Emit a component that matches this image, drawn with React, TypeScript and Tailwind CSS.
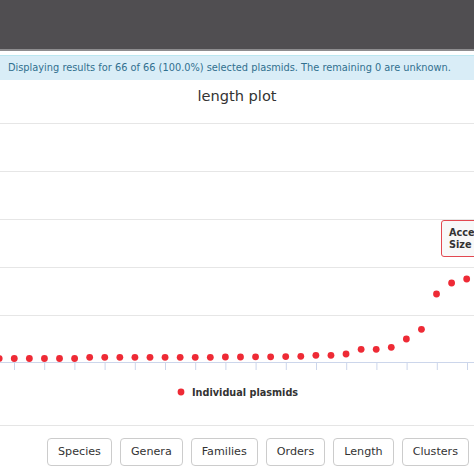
import React from "react";

const dotYs = [
  358.5, 358.5, 358.5, 358.5, 358.5, 358.5,
  357.3, 357.3, 357.3, 357.3, 357.3, 357.3, 357.3, 357.3, 357.3, 357,
  357, 356.8, 356.8, 356.6, 356.3, 355.3, 355.3, 354,
  349.3, 349.3, 347.3, 339, 329.3, 294, 283, 279,
];

const gridYs = [123.5, 171.5, 219.5, 267.5, 315.5];
const tickXs = Array.from({ length: 16 }, (_, k) => 14.5 + 30.2 * k);
const buttons = ["Species", "Genera", "Families", "Orders", "Length", "Clusters"];

function LengthChart() {
  return (
    <svg width="474" height="313" viewBox="0 112 474 313" className="block">
      {gridYs.map((y) => (
        <line key={y} x1="0" x2="474" y1={y} y2={y} stroke="#e6e6e6" strokeWidth="1" />
      ))}
      <line x1="0" x2="474" y1="362.5" y2="362.5" stroke="#ccd6eb" strokeWidth="1" />
      {tickXs.map((x) => (
        <line key={x} x1={x} x2={x} y1="363" y2="370" stroke="#ccd6eb" strokeWidth="1" />
      ))}
      {dotYs.map((y, i) => (
        <circle key={i} cx={-0.8 + 15.08 * i} cy={y} r="3.4" fill="#ee2a35" />
      ))}
      {/* legend */}
      <circle cx="181" cy="392" r="3.4" fill="#ee2a35" />
      <text
        x="192"
        y="395.5"
        fontFamily="'DejaVu Sans', sans-serif"
        fontSize="9.7"
        fontWeight="bold"
        fill="#333333"
      >
        Individual plasmids
      </text>
    </svg>
  );
}

export default function App() {
  return (
    <div className="relative w-[474px] h-[474px] overflow-hidden bg-white font-['DejaVu_Sans',sans-serif]">
      {/* top bar */}
      <div className="h-[51px] bg-[#504e51] border-b-2 border-[#8e8d8f]" />

      {/* info alert */}
      <div className="mt-[4px] h-[25px] bg-[#d9edf7] border-t border-[#bce8f1] px-[8px] flex items-center text-[9.8px] text-[#31708f] whitespace-nowrap">
        Displaying results for 66 of 66 (100.0%) selected plasmids. The remaining 0 are unknown.
      </div>

      {/* chart title */}
      <div className="h-[32px] flex items-center justify-center text-[14.6px] text-[#333333]">
        length plot
      </div>

      <LengthChart />

      {/* tooltip */}
      <div className="absolute left-[441px] top-[220px] w-[70px] h-[37px] rounded-[3px] border border-[#e24850] bg-[#f7f7f7]/90 pl-[7px] pt-[6px] text-[9.7px] font-bold leading-[12px] text-[#333333]">
        <div>Acce</div>
        <div>Size</div>
      </div>

      {/* buttons */}
      <div className="border-t border-[#e5e5e5] pt-[12px] pr-[5px] flex justify-end gap-[8px]">
        {buttons.map((b) => (
          <button
            key={b}
            className="h-[28px] px-[10px] rounded-[4px] border border-[#cccccc] bg-white text-[11.15px] text-[#333333]"
          >
            {b}
          </button>
        ))}
      </div>
    </div>
  );
}
